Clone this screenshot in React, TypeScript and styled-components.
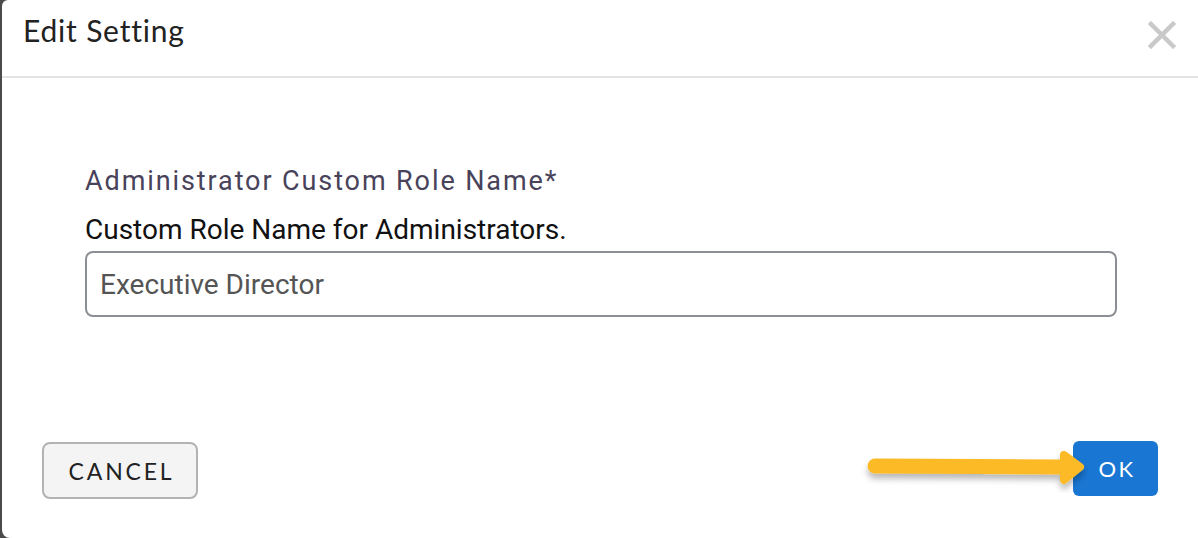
import React from "react";
import styled, { createGlobalStyle } from "styled-components";

const Global = createGlobalStyle`
  html, body { margin: 0; padding: 0; background: #4a4a4a; }
  body { width: 1198px; height: 538px; overflow: hidden; }
  * { box-sizing: border-box; }
`;

const Modal = styled.div`
  position: relative;
  margin-left: 2px;
  width: 1196px;
  height: 538px;
  background: #ffffff;
  border-radius: 6px 0 0 8px;
  display: flex;
  flex-direction: column;
  font-family: Roboto, "Liberation Sans", sans-serif;
`;

const Header = styled.div`
  height: 78px;
  border-bottom: 2px solid #e4e4e4;
  display: flex;
  align-items: flex-start;
  justify-content: space-between;
  padding: 0 22px 0 21px;
`;

const Title = styled.h2`
  margin: 15px 0 0 0;
  font-family: Lato, "Open Sans", sans-serif;
  font-weight: 400;
  font-size: 30px;
  line-height: 1;
  letter-spacing: 0.8px;
  color: #222222;
`;

const CloseButton = styled.button`
  margin-top: 21px;
  border: none;
  background: none;
  padding: 0;
  width: 28px;
  height: 28px;
  display: flex;
  align-items: center;
  justify-content: center;
  cursor: pointer;
`;

const Body = styled.div`
  flex: 1;
  padding: 87px 81px 0 83px;
  display: flex;
  flex-direction: column;
`;

const FieldLabel = styled.div`
  font-size: 27px;
  letter-spacing: 1.9px;
  color: #48435a;
  line-height: 32px;
`;

const FieldHelp = styled.div`
  margin-top: 17px;
  font-size: 28px;
  color: #111111;
  line-height: 32px;
`;

const TextInput = styled.input`
  margin-top: 5px;
  width: 100%;
  height: 66px;
  border: 2px solid #8b8e92;
  border-radius: 8px;
  padding: 0 13px;
  font-family: Roboto, "Liberation Sans", sans-serif;
  font-size: 28px;
  color: #555555;
  background: #fff;
  outline: none;
`;

const Footer = styled.div`
  height: 96px;
  display: flex;
  align-items: flex-start;
  justify-content: space-between;
  padding: 0 40px 0 40px;
`;

const CancelButton = styled.button`
  width: 156px;
  height: 57px;
  background: #f4f4f4;
  border: 2px solid #b3b3b3;
  border-radius: 8px;
  font-family: Lato, "Open Sans", sans-serif;
  font-size: 23px;
  letter-spacing: 2.8px;
  padding: 0 0 0 3px;
  color: #222;
  cursor: pointer;
`;

const OkButton = styled.button`
  position: relative;
  width: 85px;
  height: 55px;
  margin-top: -1px;
  background: #1976d2;
  border: none;
  border-radius: 6px;
  font-family: Lato, "Open Sans", sans-serif;
  font-size: 22px;
  letter-spacing: 2.5px;
  padding: 0 0 0 3px;
  color: #fff;
  cursor: pointer;
`;

const Arrow = styled.svg`
  position: absolute;
  left: 858px;
  top: 440px;
  overflow: visible;
  pointer-events: none;
`;

export default function App() {
  return (
    <>
      <Global />
      <Modal>
        <Header>
          <Title>Edit Setting</Title>
          <CloseButton aria-label="close">
            <svg width="28" height="28" viewBox="0 0 28 28">
              <path d="M3 3 L25 25 M25 3 L3 25" stroke="#c9c9c9" strokeWidth="4.5" strokeLinecap="square" />
            </svg>
          </CloseButton>
        </Header>
        <Body>
          <FieldLabel>Administrator Custom Role Name*</FieldLabel>
          <FieldHelp>Custom Role Name for Administrators.</FieldHelp>
          <TextInput defaultValue="Executive Director" />
        </Body>
        <Footer>
          <CancelButton>CANCEL</CancelButton>
          <OkButton>OK</OkButton>
        </Footer>
        <Arrow width="240" height="60" viewBox="0 0 240 60">
          <defs>
            <filter id="sh" x="-20%" y="-50%" width="140%" height="200%">
              <feDropShadow dx="0" dy="5" stdDeviation="3" floodColor="#000" floodOpacity="0.28" />
            </filter>
          </defs>
          <g filter="url(#sh)">
            <path d="M15 26 L205 27" stroke="#fbba26" strokeWidth="15" strokeLinecap="round" fill="none" />
            <path d="M204 15 L220 27 L204 40 Z" stroke="#fbba26" strokeWidth="8" strokeLinecap="round" strokeLinejoin="round" fill="#fbba26" />
          </g>
        </Arrow>
      </Modal>
    </>
  );
}
